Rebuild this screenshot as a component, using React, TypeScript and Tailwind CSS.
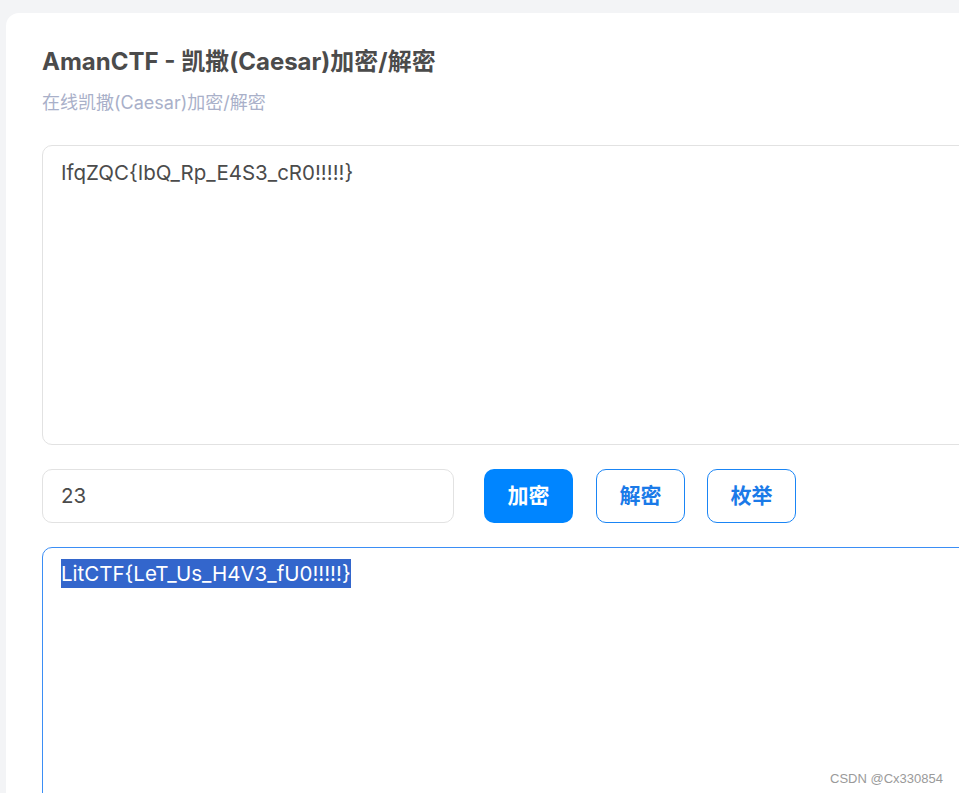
const font = { fontFamily: 'Inter, "Noto Sans CJK SC", sans-serif' };

function OutlineButton({ label }: { label: string }) {
  return (
    <button className="flex h-[54px] w-[89px] items-center justify-center rounded-[10px] border border-[#1a85f5] bg-white text-[21px] font-bold text-[#1a7ae8]">
      {label}
    </button>
  );
}

export default function App() {
  return (
    <div
      className="relative h-[793px] w-[959px] overflow-hidden bg-[#f3f4f6]"
      style={font}
    >
      <div className="ml-[6px] mt-[13px] h-[900px] w-[1000px] rounded-[13px] bg-white pl-[36px] pt-[33px]">
        <h1 className="text-[24px] font-bold leading-[32px] text-[#4b4b4b]">
          AmanCTF - 凯撒(Caesar)加密/解密
        </h1>
        <p className="mt-[13px] text-[18px] leading-[24px] text-[#a9b0c9]">
          在线凯撒(Caesar)加密/解密
        </p>

        <div className="mt-[30px] h-[300px] w-[960px] rounded-[10px] border border-[#e2e2e2] px-[18px] pt-[12px] text-[20.5px] leading-[29px] text-[#4b4b4b]">
          IfqZQC{"{"}IbQ_Rp_E4S3_cR0!!!!!{"}"}
        </div>

        <div className="mt-[24px] flex items-center">
          <div className="flex h-[54px] w-[412px] items-center rounded-[10px] border border-[#e2e2e2] px-[18px] text-[20.5px] text-[#4b4b4b]">
            23
          </div>
          <button className="ml-[30px] flex h-[54px] w-[89px] items-center justify-center rounded-[10px] bg-[#0085ff] text-[21px] font-bold text-white">
            加密
          </button>
          <div className="ml-[23px]">
            <OutlineButton label="解密" />
          </div>
          <div className="ml-[22px]">
            <OutlineButton label="枚举" />
          </div>
        </div>

        <div className="mt-[24px] h-[300px] w-[960px] rounded-[10px] border border-[#3b8ef5] px-[18px] pt-[11px] text-[20.5px] leading-[29px] text-[#4b4b4b]">
          <span className="inline-block h-[29px] bg-[#3366cc] leading-[29px] text-white">
            LitCTF{"{"}LeT_Us_H4V3_fU0!!!!!{"}"}
          </span>
        </div>
      </div>

      <div
        className="absolute left-[830px] top-[769px] text-[13px] text-[#9a9a9a]"
        style={{ fontFamily: '"Liberation Sans", sans-serif' }}
      >
        CSDN @Cx330854
      </div>
    </div>
  );
}
